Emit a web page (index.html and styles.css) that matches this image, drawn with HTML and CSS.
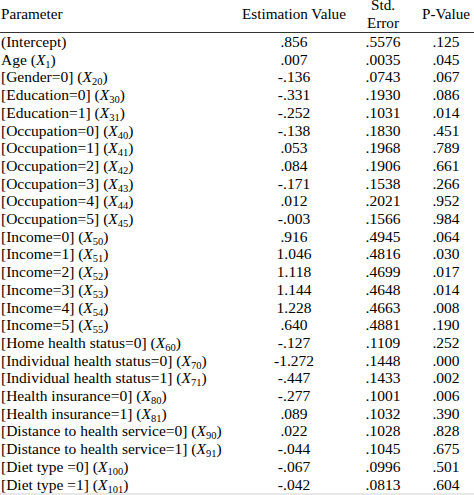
FILE: index.html
```html
<!DOCTYPE html>
<html>
<head>
<meta charset="utf-8">
<link rel="stylesheet" href="styles.css">
</head>
<body>
<div class="wrap">
<table class="tbl">
<colgroup><col class="c1"><col class="c2"><col class="c3"><col class="c4"></colgroup>
<thead>
<tr><th class="param">Parameter</th><th>Estimation Value</th><th>Std.<br>Error</th><th>P-Value</th></tr>
</thead>
<tbody>
<tr><td class="param">(Intercept)</td><td>.856</td><td>.5576</td><td>.125</td></tr>
<tr><td class="param">Age (<i>X</i><sub>1</sub>)</td><td>.007</td><td>.0035</td><td>.045</td></tr>
<tr><td class="param">[Gender=0] (<i>X</i><sub>20</sub>)</td><td>-.136</td><td>.0743</td><td>.067</td></tr>
<tr><td class="param">[Education=0] (<i>X</i><sub>30</sub>)</td><td>-.331</td><td>.1930</td><td>.086</td></tr>
<tr><td class="param">[Education=1] (<i>X</i><sub>31</sub>)</td><td>-.252</td><td>.1031</td><td>.014</td></tr>
<tr><td class="param">[Occupation=0] (<i>X</i><sub>40</sub>)</td><td>-.138</td><td>.1830</td><td>.451</td></tr>
<tr><td class="param">[Occupation=1] (<i>X</i><sub>41</sub>)</td><td>.053</td><td>.1968</td><td>.789</td></tr>
<tr><td class="param">[Occupation=2] (<i>X</i><sub>42</sub>)</td><td>.084</td><td>.1906</td><td>.661</td></tr>
<tr><td class="param">[Occupation=3] (<i>X</i><sub>43</sub>)</td><td>-.171</td><td>.1538</td><td>.266</td></tr>
<tr><td class="param">[Occupation=4] (<i>X</i><sub>44</sub>)</td><td>.012</td><td>.2021</td><td>.952</td></tr>
<tr><td class="param">[Occupation=5] (<i>X</i><sub>45</sub>)</td><td>-.003</td><td>.1566</td><td>.984</td></tr>
<tr><td class="param">[Income=0] (<i>X</i><sub>50</sub>)</td><td>.916</td><td>.4945</td><td>.064</td></tr>
<tr><td class="param">[Income=1] (<i>X</i><sub>51</sub>)</td><td>1.046</td><td>.4816</td><td>.030</td></tr>
<tr><td class="param">[Income=2] (<i>X</i><sub>52</sub>)</td><td>1.118</td><td>.4699</td><td>.017</td></tr>
<tr><td class="param">[Income=3] (<i>X</i><sub>53</sub>)</td><td>1.144</td><td>.4648</td><td>.014</td></tr>
<tr><td class="param">[Income=4] (<i>X</i><sub>54</sub>)</td><td>1.228</td><td>.4663</td><td>.008</td></tr>
<tr><td class="param">[Income=5] (<i>X</i><sub>55</sub>)</td><td>.640</td><td>.4881</td><td>.190</td></tr>
<tr><td class="param">[Home health status=0] (<i>X</i><sub>60</sub>)</td><td>-.127</td><td>.1109</td><td>.252</td></tr>
<tr><td class="param">[Individual health status=0] (<i>X</i><sub>70</sub>)</td><td>-1.272</td><td>.1448</td><td>.000</td></tr>
<tr><td class="param">[Individual health status=1] (<i>X</i><sub>71</sub>)</td><td>-.447</td><td>.1433</td><td>.002</td></tr>
<tr><td class="param">[Health insurance=0] (<i>X</i><sub>80</sub>)</td><td>-.277</td><td>.1001</td><td>.006</td></tr>
<tr><td class="param">[Health insurance=1] (<i>X</i><sub>81</sub>)</td><td>.089</td><td>.1032</td><td>.390</td></tr>
<tr><td class="param">[Distance to health service=0] (<i>X</i><sub>90</sub>)</td><td>.022</td><td>.1028</td><td>.828</td></tr>
<tr><td class="param">[Distance to health service=1] (<i>X</i><sub>91</sub>)</td><td>-.044</td><td>.1045</td><td>.675</td></tr>
<tr><td class="param">[Diet type =0] (<i>X</i><sub>100</sub>)</td><td>-.067</td><td>.0996</td><td>.501</td></tr>
<tr><td class="param">[Diet type =1] (<i>X</i><sub>101</sub>)</td><td>-.042</td><td>.0813</td><td>.604</td></tr>
</tbody>
</table>
</div>
<div class="bottom"></div>
</body>
</html>
```

FILE: styles.css
```css
html, body {
  margin: 0;
  padding: 0;
  background: #ffffff;
  overflow: hidden;
}
body {
  width: 474px;
  height: 495px;
  position: relative;
  font-family: "Liberation Serif", "Times New Roman", serif;
  font-size: 15.5px;
  color: #000;
}
.wrap {
  margin-top: -4px;
  height: 497px;
  overflow: hidden;
}
.tbl {
  border-collapse: collapse;
  width: 474px;
  table-layout: fixed;
}
.c1 { width: 240px; }
.c2 { width: 108px; }
.c3 { width: 70px; }
.c4 { width: 56px; }
.tbl th {
  font-weight: normal;
  font-size: 15.2px;
  text-align: center;
  vertical-align: middle;
  line-height: 18px;
  padding: 0;
  height: 34px;
  border-bottom: 1.5px solid #333;
}
.tbl td {
  text-align: center;
  padding: 0;
  height: 17.7px;
  line-height: 17.7px;
  white-space: nowrap;
}
.tbl .param {
  text-align: left;
  padding-left: 1px;
}
.tbl sub {
  font-size: 10.5px;
  line-height: 0;
  vertical-align: -3px;
}
.bottom {
  position: absolute;
  left: 0;
  right: 0;
  bottom: 0;
  height: 2px;
  background: #e8e8e8;
}
```
